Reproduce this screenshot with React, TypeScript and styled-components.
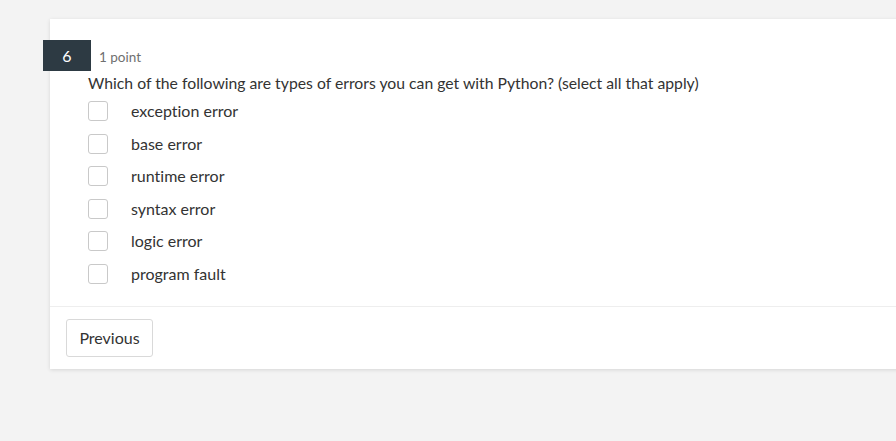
import { FC } from "react";
import styled, { createGlobalStyle } from "styled-components";

const Global = createGlobalStyle`
    body {
        margin: 0;
        background: #f3f3f3;
        font-family: Lato, "Open Sans", sans-serif;
        font-variant-ligatures: none;
        color: #333;
    }
`;

const Page = styled.div`
    height: 441px;
    padding: 19px 0 0 50px;
    box-sizing: border-box;
    overflow: hidden;
`;

const Card = styled.div`
    background: #fff;
    width: 870px;
    box-shadow: 0 1px 4px rgba(0, 0, 0, 0.12);
    padding-top: 21px;
`;

const Header = styled.div`
    display: flex;
    align-items: center;
    margin-left: -7px;
`;

const Badge = styled.div`
    width: 48px;
    height: 31px;
    background: #2d3a43;
    color: #fff;
    font-size: 16px;
    font-weight: 400;
    display: flex;
    align-items: center;
    justify-content: center;
`;

const Points = styled.span`
    margin-left: 8px;
    margin-top: 2px;
    font-size: 13.5px;
    color: #6f6f6f;
`;

const Body = styled.div`
    padding: 2px 0 22px 38px;
    border-bottom: 1px solid #eee;
`;

const Question = styled.div`
    font-size: 15.75px;
    line-height: 20px;
    color: #333;
    margin-bottom: 8px;
`;

const Options = styled.div`
    display: flex;
    flex-direction: column;
    gap: 12.6px;
`;

const Option = styled.label`
    display: flex;
    align-items: center;
    height: 20px;
    line-height: 18px;
    font-size: 16px;
    color: #333;
`;

const Box = styled.span`
    width: 18px;
    height: 18px;
    border: 1px solid #c9c9c9;
    border-radius: 3px;
    background: #fff;
    margin-right: 23px;
`;

const Footer = styled.div`
    padding: 12px 16px 12px;
`;

const Button = styled.button`
    width: 87px;
    height: 38px;
    background: #fff;
    border: 1px solid #d9d9d9;
    border-radius: 3px;
    font-family: Lato, "Open Sans", sans-serif;
    font-variant-ligatures: none;
    font-size: 16px;
    color: #333;
`;

const options = [
    "exception error",
    "base error",
    "runtime error",
    "syntax error",
    "logic error",
    "program fault",
];

const App: FC = () => (
    <Page>
        <Global />
        <Card>
            <Header>
                <Badge>6</Badge>
                <Points>1 point</Points>
            </Header>
            <Body>
                <Question>
                    Which of the following are types of errors you can get with Python? (select all that apply)
                </Question>
                <Options>
                    {options.map((o) => (
                        <Option key={o}>
                            <Box />
                            {o}
                        </Option>
                    ))}
                </Options>
            </Body>
            <Footer>
                <Button>Previous</Button>
            </Footer>
        </Card>
    </Page>
);

export default App;
